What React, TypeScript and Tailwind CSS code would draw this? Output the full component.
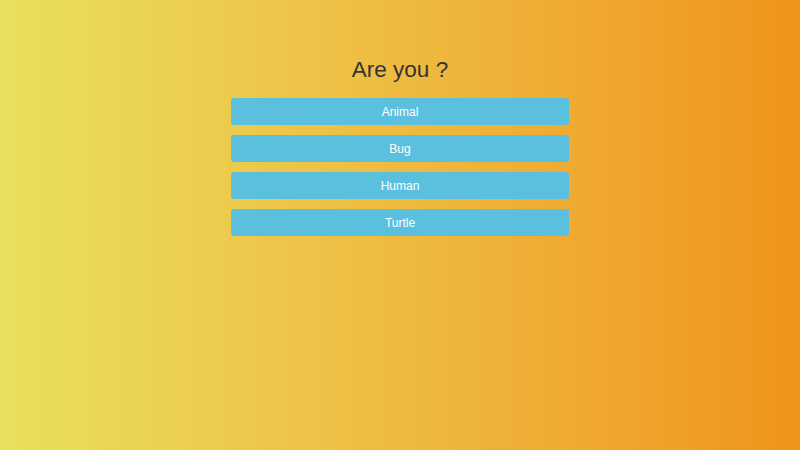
const choices = ["Animal", "Bug", "Human", "Turtle"];

export default function App() {
  return (
    <div
      className="min-h-[450px] w-full bg-gradient-to-r from-[#e9e05e] to-[#ef9419] pt-[54px]"
      style={{ fontFamily: '"Liberation Sans", Arial, sans-serif' }}
    >
      <div className="mx-auto flex w-[338px] flex-col items-center">
        <h1 className="mb-[12px] text-[22.5px] leading-[32px] text-[#333]">Are you ?</h1>
        <div className="flex w-full flex-col gap-[10px]">
          {choices.map(choice => (
            <button
              key={choice}
              className="h-[27px] w-full rounded-[3px] bg-[#5bc0de] text-[12px] text-white"
            >
              {choice}
            </button>
          ))}
        </div>
      </div>
    </div>
  );
}
